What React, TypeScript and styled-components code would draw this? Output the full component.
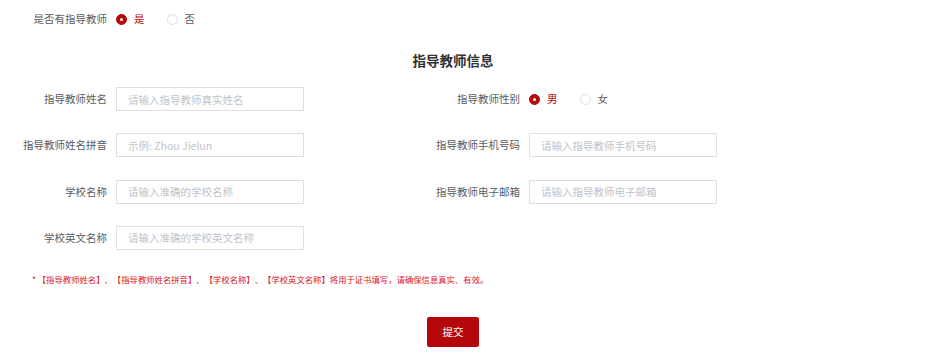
import { useState } from "react";
import styled, { createGlobalStyle } from "styled-components";

const GlobalStyle = createGlobalStyle`
  body {
    margin: 0;
    background: #fff;
    font-family: "Noto Sans CJK SC", "Noto Sans", sans-serif;
    text-spacing-trim: space-all;
  }
  * {
    box-sizing: border-box;
  }
`;

const Page = styled.div`
  width: 906px;
  padding-top: 7px;
`;

const Row = styled.div`
  display: flex;
  align-items: center;
  height: 24px;
`;

const Label = styled.label`
  width: 108px;
  flex-shrink: 0;
  padding-right: 1px;
  margin-right: 8px;
  text-align: right;
  font-size: 10.5px;
  line-height: 24px;
  color: #5a5c61;
  white-space: nowrap;
`;

const Title = styled.h3`
  margin: 17px 0 0;
  font-size: 13.5px;
  line-height: 24px;
  font-weight: 700;
  text-align: center;
  color: #303133;
`;

const Grid = styled.div`
  display: grid;
  grid-template-columns: 413px 1fr;
  row-gap: 22.33px;
  margin-top: 15px;
`;

const Field = styled.div`
  display: flex;
  align-items: center;
  height: 24px;
`;

const TextInput = styled.input`
  width: 188px;
  height: 24px;
  padding: 0 11px;
  border: 1px solid #dcdfe6;
  border-radius: 0;
  outline: none;
  font-family: inherit;
  font-size: 10.5px;
  color: #606266;

  &::placeholder {
    color: #c0c4cc;
  }
`;

const RadioGroup = styled.div`
  display: flex;
  align-items: center;
  gap: 22px;
`;

const RadioOption = styled.span<{ $checked: boolean }>`
  display: flex;
  align-items: center;
  gap: 7px;
  cursor: pointer;
  font-size: 10.5px;
  line-height: 24px;
  color: ${(p) => (p.$checked ? "#b5080a" : "#5a5c61")};
`;

const Dot = styled.span<{ $checked: boolean }>`
  position: relative;
  width: 11px;
  height: 11px;
  border-radius: 50%;
  border: 1px solid ${(p) => (p.$checked ? "#b5080a" : "#dcdfe6")};
  background: ${(p) => (p.$checked ? "#b5080a" : "#fff")};

  &::after {
    content: "";
    position: absolute;
    left: 50%;
    top: 50%;
    width: 3px;
    height: 3px;
    margin: -1.5px 0 0 -1.5px;
    border-radius: 50%;
    background: #fff;
    display: ${(p) => (p.$checked ? "block" : "none")};
  }
`;

const Note = styled.p`
  margin: 22px 0 0 32px;
  font-size: 8.35px;
  line-height: 14px;
  color: #e0141e;
  white-space: nowrap;
`;

const Actions = styled.div`
  display: flex;
  justify-content: center;
  margin-top: 31px;
`;

const SubmitButton = styled.button`
  width: 52px;
  height: 30px;
  border: none;
  border-radius: 2px;
  background: #b5080a;
  color: #fff;
  font-family: inherit;
  font-size: 10.5px;
  cursor: pointer;
`;

interface RadioProps {
  options: string[];
  value: string;
  onChange: (v: string) => void;
}

const Radios: React.FC<RadioProps> = ({ options, value, onChange }) => (
  <RadioGroup>
    {options.map((o) => (
      <RadioOption key={o} $checked={o === value} onClick={() => onChange(o)}>
        <Dot $checked={o === value} />
        {o}
      </RadioOption>
    ))}
  </RadioGroup>
);

const App = () => {
  const [hasTeacher, setHasTeacher] = useState("是");
  const [gender, setGender] = useState("男");

  return (
    <Page>
      <GlobalStyle />
      <Row>
        <Label>是否有指导教师</Label>
        <Radios options={["是", "否"]} value={hasTeacher} onChange={setHasTeacher} />
      </Row>

      <Title>指导教师信息</Title>

      <Grid>
        <Field>
          <Label>指导教师姓名</Label>
          <TextInput placeholder="请输入指导教师真实姓名" />
        </Field>
        <Field>
          <Label>指导教师性别</Label>
          <Radios options={["男", "女"]} value={gender} onChange={setGender} />
        </Field>

        <Field>
          <Label>指导教师姓名拼音</Label>
          <TextInput placeholder="示例: Zhou Jielun" />
        </Field>
        <Field>
          <Label>指导教师手机号码</Label>
          <TextInput placeholder="请输入指导教师手机号码" />
        </Field>

        <Field>
          <Label>学校名称</Label>
          <TextInput placeholder="请输入准确的学校名称" />
        </Field>
        <Field>
          <Label>指导教师电子邮箱</Label>
          <TextInput placeholder="请输入指导教师电子邮箱" />
        </Field>

        <Field>
          <Label>学校英文名称</Label>
          <TextInput placeholder="请输入准确的学校英文名称" />
        </Field>
      </Grid>

      <Note>
        * 【指导教师姓名】、【指导教师姓名拼音】、【学校名称】、【学校英文名称】将用于证书填写，请确保信息真实、有效。
      </Note>

      <Actions>
        <SubmitButton>提交</SubmitButton>
      </Actions>
    </Page>
  );
};

export default App;
